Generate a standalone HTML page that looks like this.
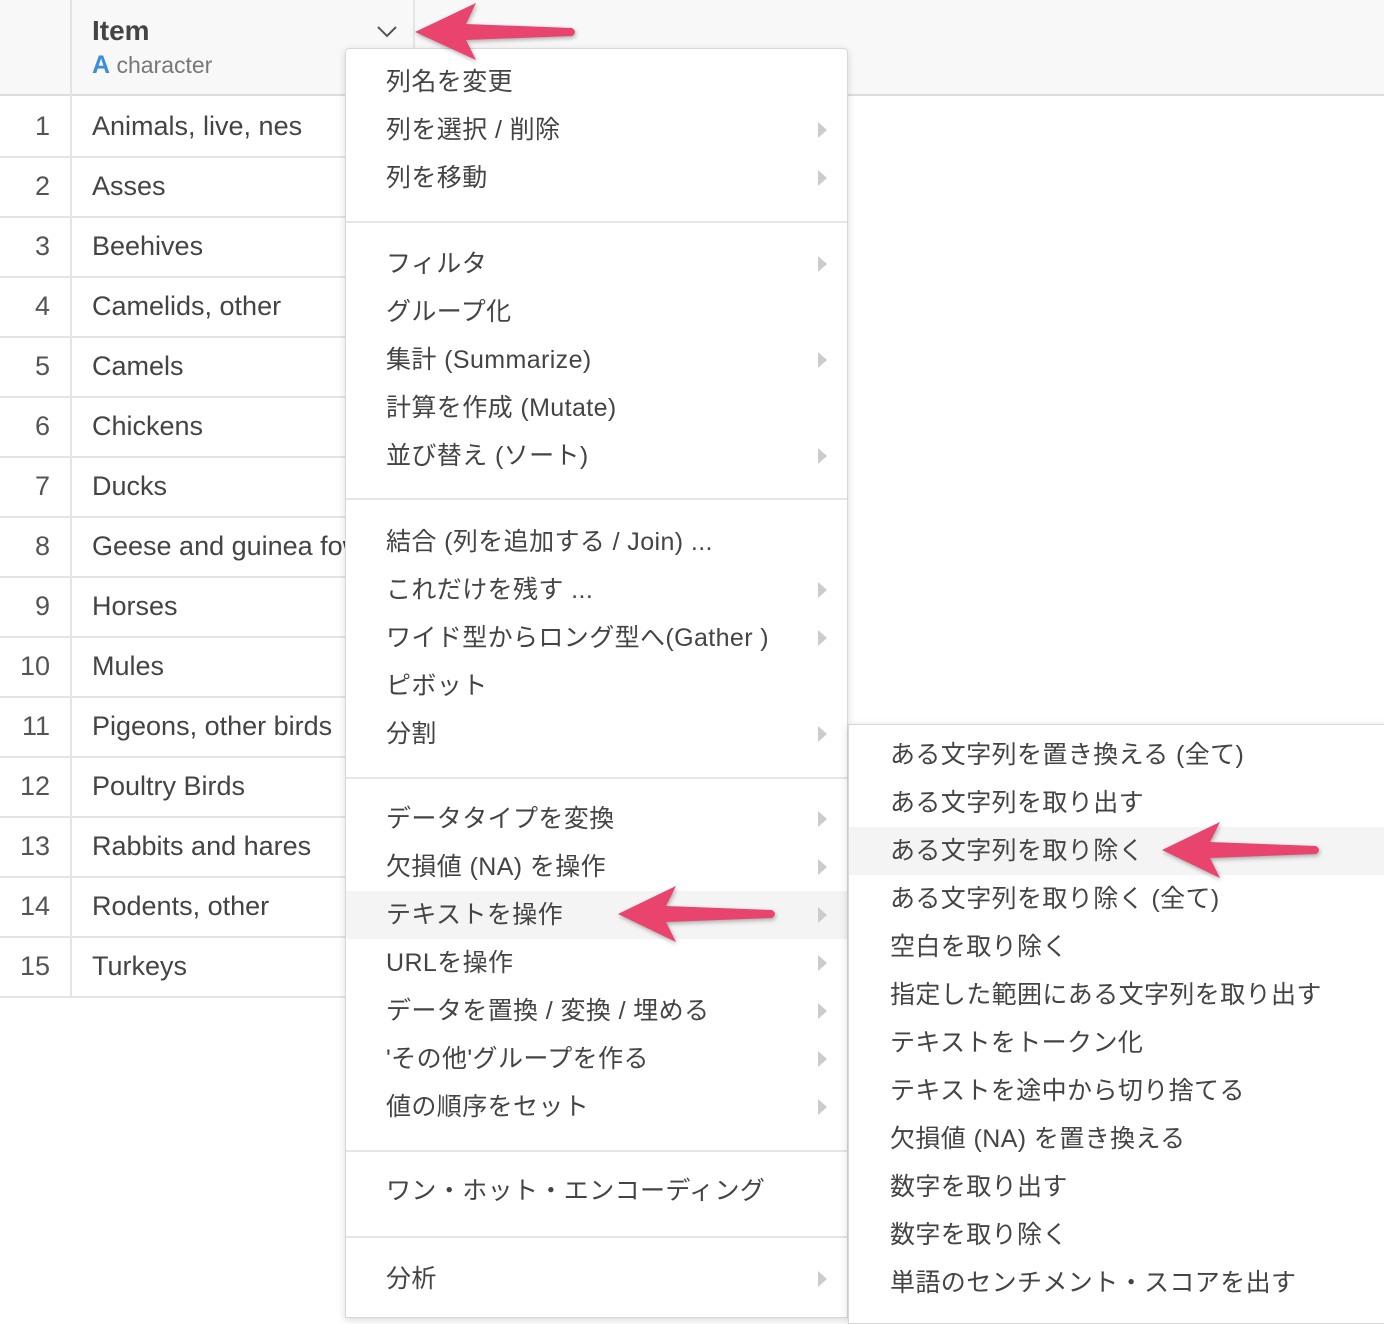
<!DOCTYPE html>
<html><head><meta charset="utf-8"><style>
*{margin:0;padding:0;box-sizing:border-box}
body{width:1384px;height:1308px;overflow:hidden;background:#fff;position:relative;font-family:"Liberation Sans","Noto Sans CJK JP",sans-serif;color:#444}
.hdr{position:absolute;left:0;top:0;width:1384px;height:96px;background:#f8f8f8;border-bottom:2px solid #ddd}
.vl{position:absolute;top:0;width:2px;background:#e4e4e4}
.row{position:absolute;left:0;width:414px;height:60px;border-bottom:2px solid #e4e4e4;font-size:27px}
.row .n{position:absolute;left:0;width:50px;text-align:right;top:13px;color:#555}
.row .t{position:absolute;left:92px;top:13px;white-space:nowrap;color:#444}
.menu{position:absolute;background:#fff;border:1px solid #d8d8d8;box-shadow:0 2px 8px rgba(0,0,0,.15);border-radius:4px 4px 0 0}
.it{position:absolute;left:0;right:0;height:48px;font-size:25px;letter-spacing:0.4px;color:#444;white-space:nowrap}
.it span{position:absolute;top:4px}
.it.hl{background:#f4f4f4}
.ch{position:absolute;right:20px;top:16px;width:0;height:0;border-left:9px solid #ccc;border-top:8px solid transparent;border-bottom:8px solid transparent}
.sep{position:absolute;left:0;right:0;height:2px;background:#e6e6e6}
</style></head><body>
<div class="hdr"></div>
<div class="vl" style="left:413px;height:96px"></div>
<div style="position:absolute;left:92px;top:15px;font-size:28px;font-weight:bold;color:#444">Item</div>
<div style="position:absolute;left:92px;top:51px;font-size:23px;color:#777"><b style="color:#3a8ee0;font-size:25px">A</b> character</div>
<svg style="position:absolute;left:376px;top:24px" width="22" height="14"><path d="M2 3 L11 12 L20 3" stroke="#555" stroke-width="2" fill="none"/></svg>

<div class="row" style="top:98px"><div class="n">1</div><div class="t">Animals, live, nes</div></div>
<div class="row" style="top:158px"><div class="n">2</div><div class="t">Asses</div></div>
<div class="row" style="top:218px"><div class="n">3</div><div class="t">Beehives</div></div>
<div class="row" style="top:278px"><div class="n">4</div><div class="t">Camelids, other</div></div>
<div class="row" style="top:338px"><div class="n">5</div><div class="t">Camels</div></div>
<div class="row" style="top:398px"><div class="n">6</div><div class="t">Chickens</div></div>
<div class="row" style="top:458px"><div class="n">7</div><div class="t">Ducks</div></div>
<div class="row" style="top:518px"><div class="n">8</div><div class="t">Geese and guinea fowls</div></div>
<div class="row" style="top:578px"><div class="n">9</div><div class="t">Horses</div></div>
<div class="row" style="top:638px"><div class="n">10</div><div class="t">Mules</div></div>
<div class="row" style="top:698px"><div class="n">11</div><div class="t">Pigeons, other birds</div></div>
<div class="row" style="top:758px"><div class="n">12</div><div class="t">Poultry Birds</div></div>
<div class="row" style="top:818px"><div class="n">13</div><div class="t">Rabbits and hares</div></div>
<div class="row" style="top:878px"><div class="n">14</div><div class="t">Rodents, other</div></div>
<div class="row" style="top:938px"><div class="n">15</div><div class="t">Turkeys</div></div>
<div class="vl" style="left:70px;height:996px"></div>

<div class="menu" style="left:345px;top:48px;width:503px;height:1270px">
<div class="it" style="top:9px"><span style="left:40px">列名を変更</span></div>
<div class="it" style="top:57px"><span style="left:40px">列を選択 / 削除</span><i class="ch"></i></div>
<div class="it" style="top:105px"><span style="left:40px">列を移動</span><i class="ch"></i></div>
<div class="sep" style="top:172px"></div>
<div class="it" style="top:191px"><span style="left:40px">フィルタ</span><i class="ch"></i></div>
<div class="it" style="top:239px"><span style="left:40px">グループ化</span></div>
<div class="it" style="top:287px"><span style="left:40px">集計 (Summarize)</span><i class="ch"></i></div>
<div class="it" style="top:335px"><span style="left:40px">計算を作成 (Mutate)</span></div>
<div class="it" style="top:383px"><span style="left:40px">並び替え (ソート)</span><i class="ch"></i></div>
<div class="sep" style="top:449px"></div>
<div class="it" style="top:469px"><span style="left:40px">結合 (列を追加する / Join) ...</span></div>
<div class="it" style="top:517px"><span style="left:40px">これだけを残す ...</span><i class="ch"></i></div>
<div class="it" style="top:565px"><span style="left:40px">ワイド型からロング型へ(Gather )</span><i class="ch"></i></div>
<div class="it" style="top:613px"><span style="left:40px">ピボット</span></div>
<div class="it" style="top:661px"><span style="left:40px">分割</span><i class="ch"></i></div>
<div class="sep" style="top:728px"></div>
<div class="it" style="top:746px"><span style="left:40px">データタイプを変換</span><i class="ch"></i></div>
<div class="it" style="top:794px"><span style="left:40px">欠損値 (NA) を操作</span><i class="ch"></i></div>
<div class="it hl" style="top:842px"><span style="left:40px">テキストを操作</span><i class="ch"></i></div>
<div class="it" style="top:890px"><span style="left:40px">URLを操作</span><i class="ch"></i></div>
<div class="it" style="top:938px"><span style="left:40px">データを置換 / 変換 / 埋める</span><i class="ch"></i></div>
<div class="it" style="top:986px"><span style="left:40px">'その他'グループを作る</span><i class="ch"></i></div>
<div class="it" style="top:1034px"><span style="left:40px">値の順序をセット</span><i class="ch"></i></div>
<div class="sep" style="top:1101px"></div>
<div class="it" style="top:1118px"><span style="left:40px">ワン・ホット・エンコーディング</span></div>
<div class="sep" style="top:1187px"></div>
<div class="it" style="top:1206px"><span style="left:40px">分析</span><i class="ch"></i></div>
</div>

<div class="menu" style="left:848px;top:724px;width:540px;height:600px;border-radius:0">
<div class="it" style="top:6px"><span style="left:41px">ある文字列を置き換える (全て)</span></div>
<div class="it" style="top:54px"><span style="left:41px">ある文字列を取り出す</span></div>
<div class="it hl" style="top:102px"><span style="left:41px">ある文字列を取り除く</span></div>
<div class="it" style="top:150px"><span style="left:41px">ある文字列を取り除く (全て)</span></div>
<div class="it" style="top:198px"><span style="left:41px">空白を取り除く</span></div>
<div class="it" style="top:246px"><span style="left:41px">指定した範囲にある文字列を取り出す</span></div>
<div class="it" style="top:294px"><span style="left:41px">テキストをトークン化</span></div>
<div class="it" style="top:342px"><span style="left:41px">テキストを途中から切り捨てる</span></div>
<div class="it" style="top:390px"><span style="left:41px">欠損値 (NA) を置き換える</span></div>
<div class="it" style="top:438px"><span style="left:41px">数字を取り出す</span></div>
<div class="it" style="top:486px"><span style="left:41px">数字を取り除く</span></div>
<div class="it" style="top:534px"><span style="left:41px">単語のセンチメント・スコアを出す</span></div>
</div>

<svg style="position:absolute;left:0;top:0" width="1384" height="1308">
<g fill="#e8446e" style="filter:drop-shadow(1px 2px 2px rgba(0,0,0,.3))">
<path d="M415 32 L476 3 L466 24 L572 28 Q578 32 572 36 L466 40 L476 60 Z"/>
<path d="M618 914 L676 886 L666 906 L772 910 Q778 914 772 918 L666 922 L676 942 Z"/>
<path d="M1162 850 L1220 822 L1210 842 L1316 846 Q1322 850 1316 854 L1210 858 L1220 878 Z"/>
</g></svg>
</body></html>
